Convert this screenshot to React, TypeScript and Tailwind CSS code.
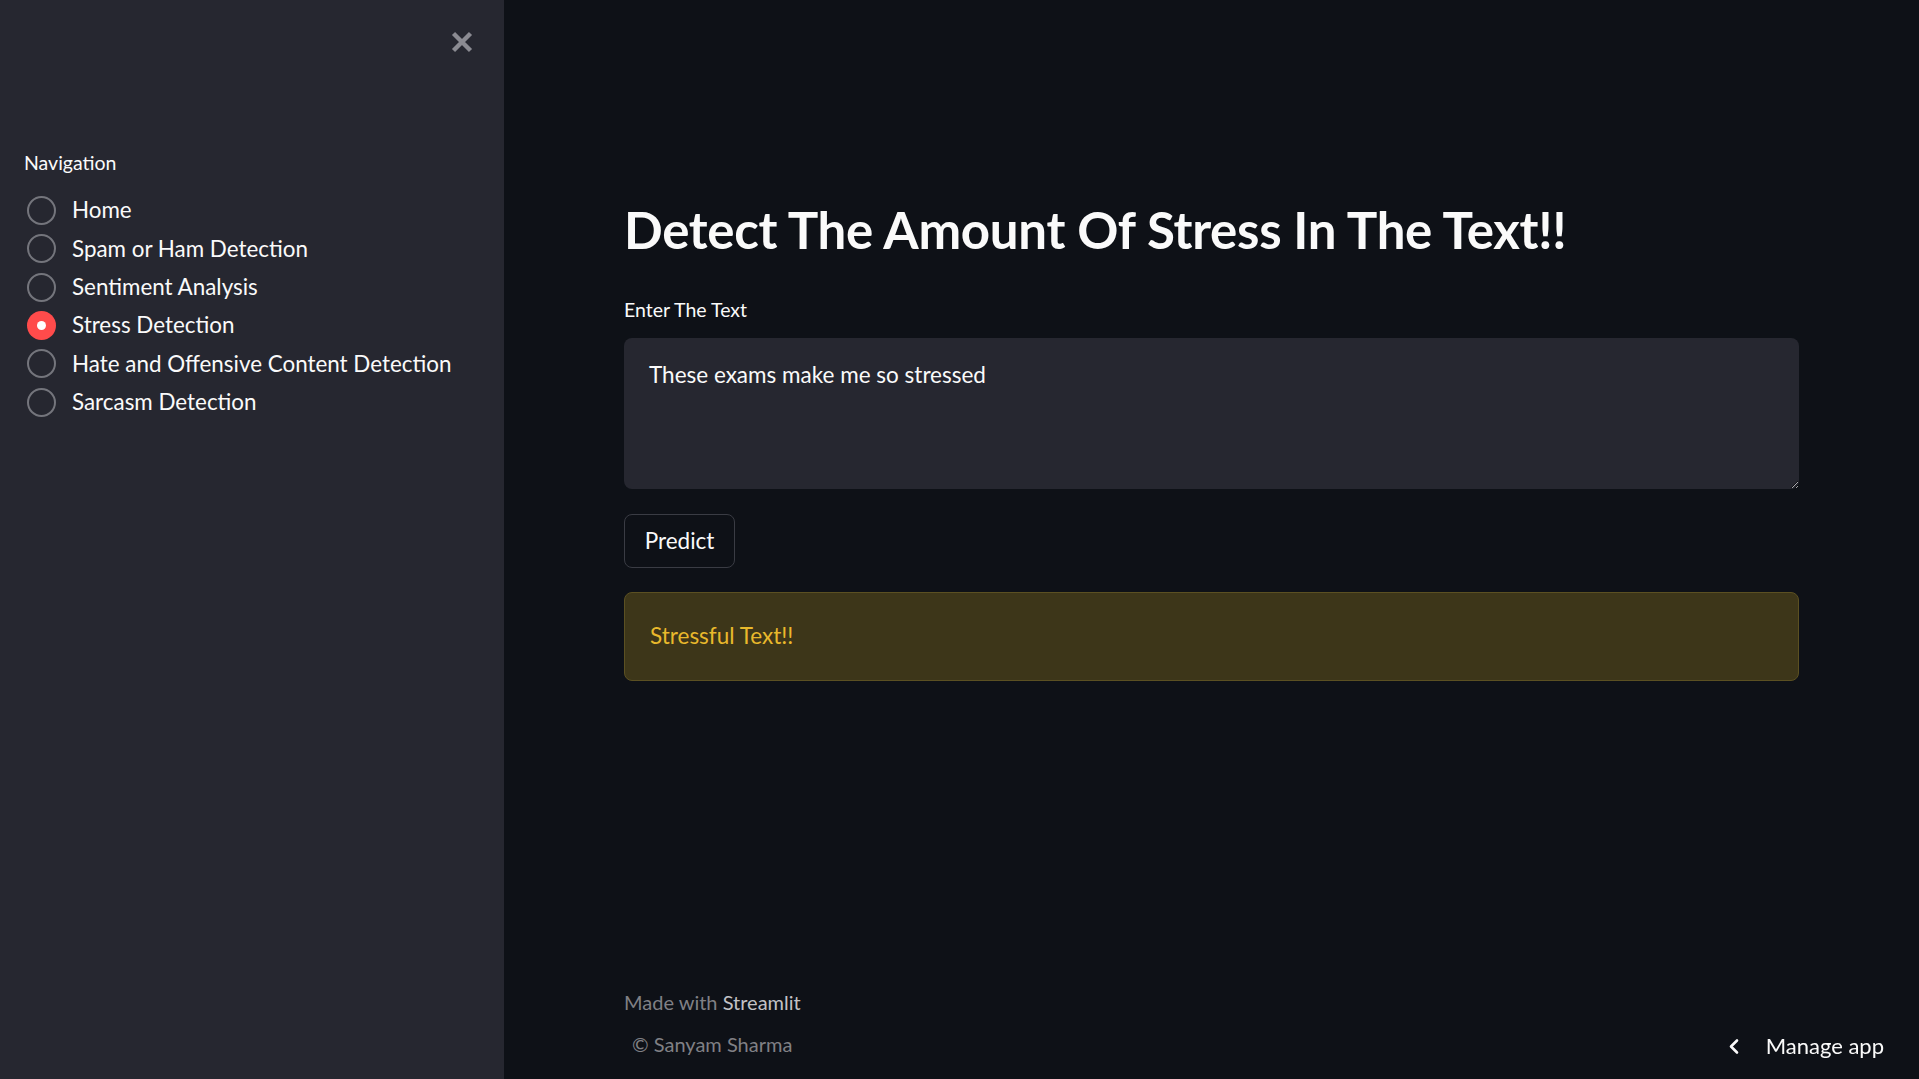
import { useState } from 'react'

const PAGES = [
  'Home',
  'Spam or Ham Detection',
  'Sentiment Analysis',
  'Stress Detection',
  'Hate and Offensive Content Detection',
  'Sarcasm Detection',
]

const FONT = { fontFamily: 'Lato, "Noto Sans", sans-serif' }

function Radio({ label, checked, onSelect }: { label: string; checked: boolean; onSelect: () => void }) {
  return (
    <button onClick={onSelect} className="flex items-center h-[38.3px] text-left">
      <span className="w-[30px] h-[30px] ml-[27px] flex items-center justify-center shrink-0">
        {checked ? (
          <span className="w-[29px] h-[29px] rounded-full bg-[#ff4b4b] flex items-center justify-center">
            <span className="w-[9px] h-[9px] rounded-full bg-white" />
          </span>
        ) : (
          <span className="w-[29px] h-[29px] rounded-full border-[2.5px] border-[#74757c]" />
        )}
      </span>
      <span className="ml-[16px] text-[22.4px] text-[#fafafa] leading-none">{label}</span>
    </button>
  )
}

export default function App() {
  const [page, setPage] = useState('Stress Detection')
  const [text, setText] = useState('These exams make me so stressed')

  return (
    <div className="flex h-screen w-full bg-[#0e1117] overflow-hidden" style={FONT}>
      <aside className="w-[504px] shrink-0 bg-[#262730] flex flex-col">
        <div className="flex justify-end pt-[30px] pr-[30px]">
          <button className="w-[24px] h-[24px] text-[#8b8b92]" title="Close sidebar">
            <svg viewBox="0 0 24 24" width="24" height="24" fill="none" stroke="currentColor" strokeWidth="4.4" strokeLinecap="butt">
              <path d="M3.5 3.5 L20.5 20.5 M20.5 3.5 L3.5 20.5" />
            </svg>
          </button>
        </div>
        <div className="mt-[99px] pl-[24px] text-[19.5px] text-[#fafafa] leading-none">Navigation</div>
        <div className="mt-[19px] flex flex-col -ml-[1px]">
          {PAGES.map((p) => (
            <Radio key={p} label={p} checked={p === page} onSelect={() => setPage(p)} />
          ))}
        </div>
      </aside>

      <main className="flex-1 flex flex-col">
        <div className="w-[1175px] mx-auto flex flex-col flex-1">
          <h1 className="mt-[197px] text-[51px] font-bold text-[#fafafa] leading-[66px] tracking-[-0.3px]">
            Detect The Amount Of Stress In The Text!!
          </h1>
          <label className="mt-[37px] text-[19.5px] text-[#fafafa] leading-none">Enter The Text</label>
          <textarea
            value={text}
            onChange={(e) => setText(e.target.value)}
            className="mt-[18px] h-[151px] w-full rounded-[8px] bg-[#262730] text-[#fafafa] text-[22.5px] leading-[38px] px-[25px] pt-[18px] outline-none"
            style={FONT}
          />
          <button className="mt-[25px] w-[111px] h-[54px] rounded-[8px] border border-[#3a3c44] text-[22.5px] text-[#fafafa] bg-[#0e1117]">
            Predict
          </button>
          <div className="mt-[24px] h-[89px] rounded-[8px] bg-[#3d3619] border border-[#5b5022] flex items-center px-[25px] text-[22.5px] text-[#e9b92c]">
            Stressful Text!!
          </div>
          <div className="flex-1" />
          <div className="text-[20px] leading-none text-[#808085]">
            Made with <span className="text-[#c2c2c6]">Streamlit</span>
          </div>
          <div className="mt-[22px] mb-[25px] pl-[8px] text-[20px] leading-none text-[#808085]">© Sanyam Sharma</div>
        </div>
      </main>

      <div className="fixed right-[35px] bottom-[22px] flex items-center gap-[26px] text-[#fafafa]">
        <svg viewBox="0 0 12 16" width="12" height="17" fill="none" stroke="currentColor" strokeWidth="2.6" strokeLinecap="round" strokeLinejoin="round">
          <path d="M9 2 L3 8 L9 14" />
        </svg>
        <span className="text-[22px] leading-none" style={{ fontFamily: 'Lato, sans-serif' }}>Manage app</span>
      </div>
    </div>
  )
}
